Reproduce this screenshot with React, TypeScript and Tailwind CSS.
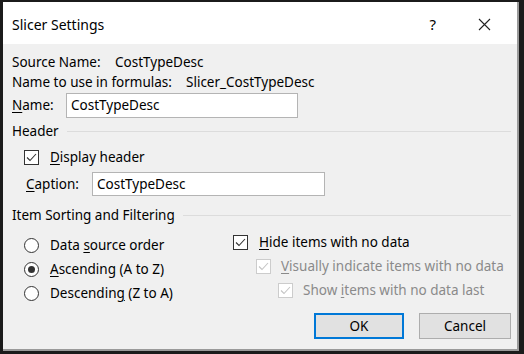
import React from 'react';

const font = { fontFamily: '"Noto Sans", "Open Sans", Arial, sans-serif' };

const U = ({ children }: { children: React.ReactNode }) => <span className="underline underline-offset-2">{children}</span>;

const Check = ({ disabled = false }: { disabled?: boolean }) => (
    <span
        className={`flex h-[15px] w-[15px] shrink-0 items-center justify-center border bg-white ${
            disabled ? 'border-[#cccccc]' : 'border-[#333333]'
        }`}
    >
        <svg width="11" height="11" viewBox="0 0 11 11">
            <path d="M1 5.5 L4 8.5 L10 2" fill="none" stroke={disabled ? '#c4c4c4' : '#333333'} strokeWidth="1.1" />
        </svg>
    </span>
);

const Radio = ({ checked = false }: { checked?: boolean }) => (
    <span className="flex h-[15px] w-[15px] shrink-0 items-center justify-center rounded-full border border-[#333333] bg-white">
        {checked && <span className="h-[7px] w-[7px] rounded-full bg-[#333333]" />}
    </span>
);

const SectionTitle = ({ text }: { text: string }) => (
    <div className="flex h-5 items-center gap-[8px] pr-[6px]">
        <span>{text}</span>
        <div className="h-px flex-1 bg-[#dcdcdc]" />
    </div>
);

export default function App() {
    return (
        <div className="h-[354px] w-[524px] bg-[#1b1b1b] pb-[3px] pl-[3px] pr-[5px] pt-[2px]" style={font}>
            <div className="flex h-full flex-col border-b-2 border-r-2 border-[#9a9a9a] bg-[#f0f0f0] text-[13.5px] text-black">
                {/* Title bar */}
                <div className="flex h-[42px] shrink-0 items-center bg-white pl-[9px] pt-[3px]">
                    <span className="text-[14px]">Slicer Settings</span>
                    <span className="ml-auto mr-[42px] text-[15px]">?</span>
                    <svg width="13" height="13" viewBox="0 0 13 13" className="mr-[26px]">
                        <path d="M1 1 L12 12 M12 1 L1 12" stroke="#222222" strokeWidth="1.1" />
                    </svg>
                </div>

                {/* Body */}
                <div className="flex flex-1 flex-col pl-[9px] pt-[8px]">
                    <div className="flex h-5 items-center">
                        <span className="w-[103px]">Source Name:</span>
                        <span>CostTypeDesc</span>
                    </div>
                    <div className="flex h-5 items-center">
                        <span className="w-[174px]">Name to use in formulas:</span>
                        <span>Slicer_CostTypeDesc</span>
                    </div>
                    <div className="flex h-[26px] items-center">
                        <span className="w-[54px]">
                            <U>N</U>ame:
                        </span>
                        <div className="flex h-[25px] w-[232px] items-center border border-[#b4b4b4] bg-white pl-[4px]">CostTypeDesc</div>
                    </div>

                    <div className="mt-[3px]">
                        <SectionTitle text="Header" />
                    </div>
                    <div className="ml-[12px] mt-[6px] flex h-5 items-center gap-[11px]">
                        <Check />
                        <span>
                            <U>D</U>isplay header
                        </span>
                    </div>
                    <div className="ml-[14px] mt-[5px] flex h-6 items-center">
                        <span className="w-[66px]">
                            <U>C</U>aption:
                        </span>
                        <div className="flex h-6 w-[233px] items-center border border-[#b4b4b4] bg-white pl-[4px]">CostTypeDesc</div>
                    </div>

                    <div className="mt-[9px]">
                        <SectionTitle text="Item Sorting and Filtering" />
                    </div>

                    <div className="flex">
                        <div className="ml-[12px] mt-[8px] flex w-[209px] flex-col">
                            <div className="flex h-6 items-center gap-[11px]">
                                <Radio />
                                <span>
                                    Data <U>s</U>ource order
                                </span>
                            </div>
                            <div className="flex h-6 items-center gap-[11px]">
                                <Radio checked />
                                <span>
                                    <U>A</U>scending (A to Z)
                                </span>
                            </div>
                            <div className="flex h-6 items-center gap-[11px]">
                                <Radio />
                                <span>
                                    Descendin<U>g</U> (Z to A)
                                </span>
                            </div>
                        </div>
                        <div className="mt-[5px] flex flex-col">
                            <div className="flex h-6 items-center gap-[11px]">
                                <Check />
                                <span>
                                    <U>H</U>ide items with no data
                                </span>
                            </div>
                            <div className="ml-[23px] flex h-6 items-center gap-[10px] text-[#8a8a8a]">
                                <Check disabled />
                                <span>
                                    <U>V</U>isually indicate items with no data
                                </span>
                            </div>
                            <div className="ml-[45px] flex h-6 items-center gap-[10px] text-[#8a8a8a]">
                                <Check disabled />
                                <span>
                                    Show <U>i</U>tems with no data last
                                </span>
                            </div>
                        </div>
                    </div>

                    <div className="mt-[8px] flex justify-end gap-[15px] pr-[6px]">
                        <button className="flex h-[26px] w-[90px] items-center justify-center border-2 border-[#0078d7] bg-[#e1e1e1]">OK</button>
                        <button className="flex h-[26px] w-[92px] items-center justify-center border border-[#adadad] bg-[#e1e1e1]">Cancel</button>
                    </div>
                </div>
            </div>
        </div>
    );
}
